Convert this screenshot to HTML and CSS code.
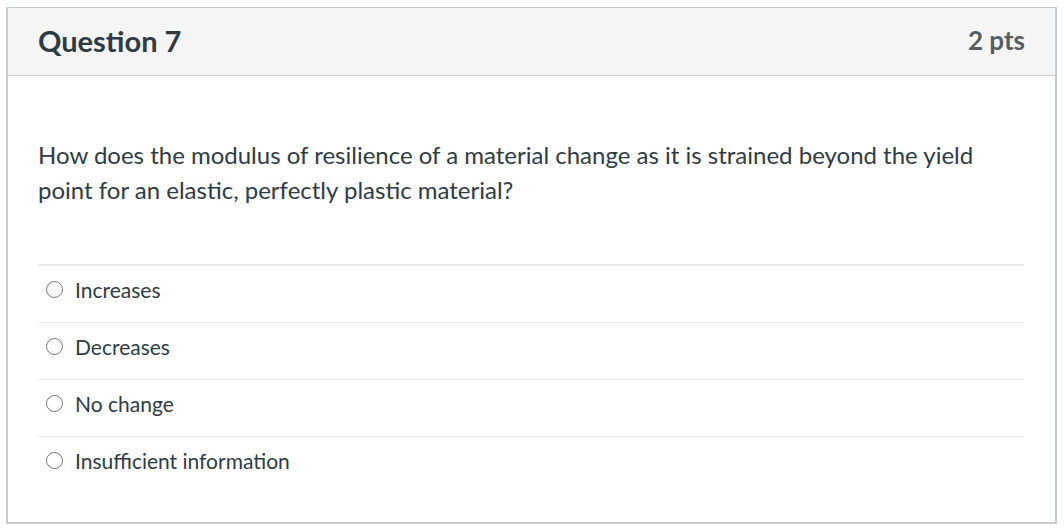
FILE: index.html
```html
<!DOCTYPE html>
<html>
<head>
<meta charset="utf-8">
<link rel="stylesheet" href="styles.css">
</head>
<body>
<div class="card">
  <div class="card-header">
    <h2 class="title">Question 7</h2>
    <span class="pts">2 pts</span>
  </div>
  <div class="card-body">
    <p class="question">How does the modulus of resilience of a material change as it is strained beyond the yield point for an elastic, perfectly plastic material?</p>
    <div class="answers">
      <label class="answer"><span class="radio"></span><span class="answer-text">Increases</span></label>
      <label class="answer"><span class="radio"></span><span class="answer-text">Decreases</span></label>
      <label class="answer"><span class="radio"></span><span class="answer-text">No change</span></label>
      <label class="answer"><span class="radio"></span><span class="answer-text">Insufficient information</span></label>
    </div>
  </div>
</div>
</body>
</html>
```
FILE: styles.css
```css
html, body {
  margin: 0;
  padding: 0;
  background: #ffffff;
}
body {
  font-family: Lato, "Open Sans", sans-serif;
  color: #2d3b45;
  padding: 7px 0 0 6px;
}
.card {
  width: 1047px;
  height: 514px;
  border-top: 1px solid #c7cdd1;
  border-bottom: 2px solid #c7cdd1;
  border-left: 2px solid #c7cdd1;
  border-right: 2px solid #c7cdd1;
  box-sizing: content-box;
  display: flex;
  flex-direction: column;
}
.card-header {
  height: 68px;
  background: #f5f5f5;
  border-bottom: 1px solid #c7cdd1;
  display: flex;
  align-items: center;
  justify-content: space-between;
  padding: 0 30px 3px 30px;
  box-sizing: border-box;
}
.title {
  margin: 0;
  font-size: 29px;
  font-weight: 700;
  color: #2d3b45;
}
.pts {
  font-size: 26px;
  font-weight: 700;
  color: #555d63;
}
.card-body {
  padding: 0 31px 0 30px;
}
.question {
  margin: 61px 0 0 0;
  font-size: 24px;
  line-height: 35px;
  color: #2d3b45;
}
.answers {
  margin-top: 57px;
  border-top: 2px solid #e8eaec;
}
.answer {
  display: flex;
  align-items: center;
  height: 46px;
  padding-bottom: 10px;
  border-bottom: 1px solid #e8eaec;
  padding-left: 8px;
}
.answer:last-child {
  border-bottom: none;
}
.radio {
  width: 17px;
  height: 17px;
  border: 1.6px solid #6f7478;
  border-radius: 50%;
  box-sizing: border-box;
  margin-right: 12px;
  flex: none;
}
.answer-text {
  font-size: 21px;
  color: #2d3b45;
}
```
